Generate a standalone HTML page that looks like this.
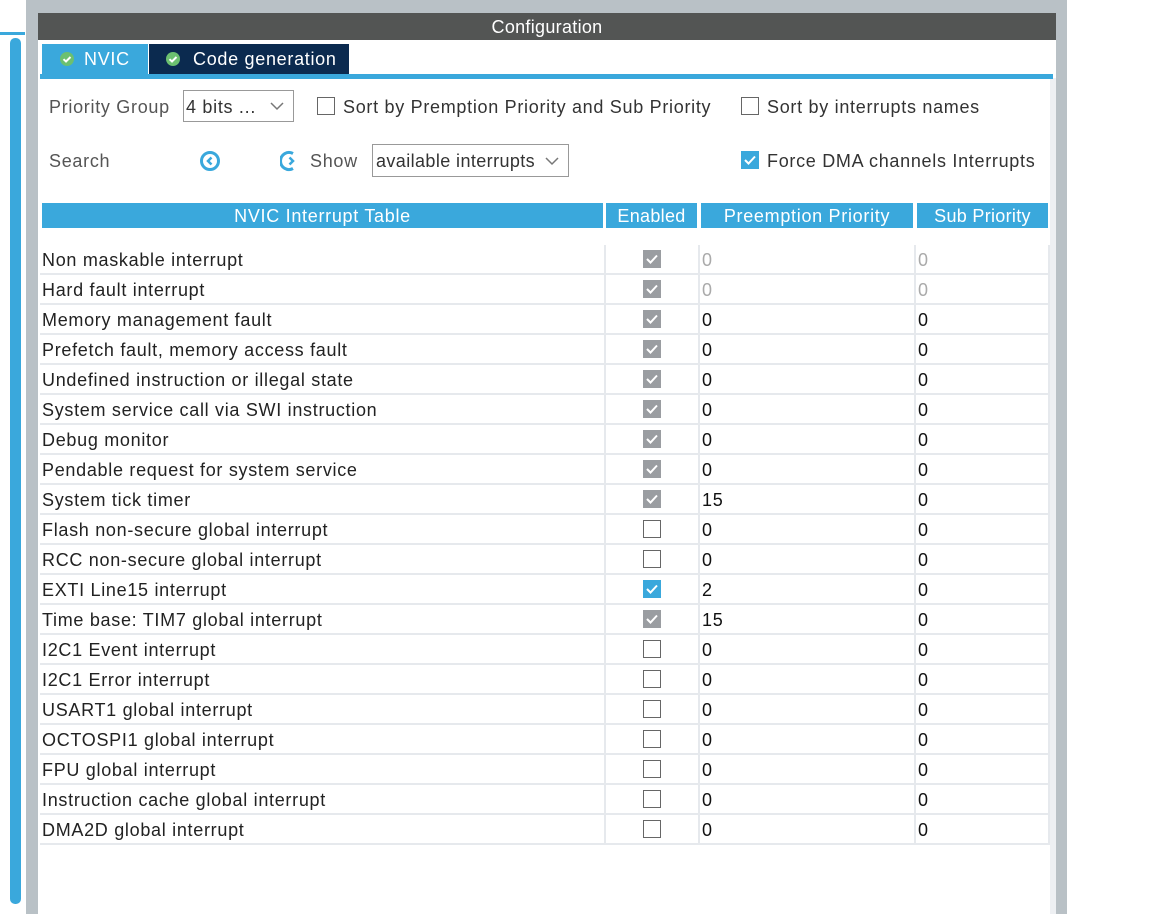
<!DOCTYPE html>
<html><head><meta charset="utf-8"><style>
*{margin:0;padding:0;box-sizing:border-box}
body{width:1154px;height:914px;background:#fff;position:relative;overflow:hidden;font-family:"Liberation Sans",Arial,sans-serif;font-size:18px;color:#333;letter-spacing:0.7px}
.a{position:absolute}
.cb{position:absolute;width:18px;height:18px;border:1.5px solid #666;background:#fff}
.cb.g{background:#9a9da1;border:none}
.cb.b{background:#3aa8dc;border:none}
.cb svg{position:absolute;left:3px;top:4px}
.row{position:absolute;left:40px;width:1010px;height:30px;border-bottom:2px solid #e6e9ed}
.row span{position:absolute;top:5px}
.th{position:absolute;top:203px;height:25px;background:#3aa8dc;color:#fff;text-align:center;line-height:27px}
</style></head><body>
<div class="a" style="left:0;top:32px;width:25px;height:3px;background:#3aa8dc"></div>
<div class="a" style="left:10px;top:38px;width:11px;height:866px;background:#3aa8dc;border-radius:5px"></div>
<div class="a" style="left:26px;top:0;width:1041px;height:914px;background:#b9c1c6"></div>
<div class="a" style="left:38px;top:13px;width:1018px;height:901px;background:#fff"></div>
<div class="a" style="left:38px;top:13px;width:1018px;height:27px;background:#535554;color:#fff;text-align:center;line-height:29px;letter-spacing:0.3px">Configuration</div>
<div class="a" style="left:1050px;top:78px;width:6px;height:836px;background:#eef0f3"></div>
<div class="a" style="left:42px;top:44px;width:106px;height:32px;background:#3aa8dc;color:#fff;line-height:30px;padding-left:20px"><svg class="a" style="left:18px;top:8px" width="14" height="14"><circle cx="7" cy="7" r="7" fill="#6cc070"/><path d="M3.5 7.2l2.5 2.3 4.5-4.5" stroke="#fff" stroke-width="2" fill="none"/></svg><span style="margin-left:22px">NVIC</span></div>
<div class="a" style="left:149px;top:44px;width:200px;height:31px;background:#0b2a4f;color:#fff;line-height:30px"><svg class="a" style="left:17px;top:8px" width="14" height="14"><circle cx="7" cy="7" r="7" fill="#6cc070"/><path d="M3.5 7.2l2.5 2.3 4.5-4.5" stroke="#fff" stroke-width="2" fill="none"/></svg><span style="margin-left:44px">Code generation</span></div>
<div class="a" style="left:40px;top:74px;width:1013px;height:5px;background:#3aa8dc"></div>
<div class="a" style="left:49px;top:97px;color:#555">Priority Group</div>
<div class="a" style="left:183px;top:90px;width:111px;height:32px;border:1.5px solid #999;padding:6px 0 0 2px;color:#333">4 bits ...<svg class="a" style="left:86px;top:11px" width="14" height="9"><path d="M1 1l6 6 6-6" stroke="#777" stroke-width="1.5" fill="none"/></svg></div>
<div class="cb" style="left:317px;top:97px"></div>
<div class="a" style="left:343px;top:97px">Sort by Premption Priority and Sub Priority</div>
<div class="cb" style="left:741px;top:97px"></div>
<div class="a" style="left:767px;top:97px">Sort by interrupts names</div>
<div class="a" style="left:49px;top:151px;color:#555">Search</div>
<svg class="a" style="left:199px;top:150px" width="22" height="22"><circle cx="11" cy="11" r="8.5" stroke="#3aa8dc" stroke-width="3" fill="none"/><path d="M12.5 7.5L9 11l3.5 3.5" stroke="#3aa8dc" stroke-width="2.5" fill="none"/></svg>
<svg class="a" style="left:280px;top:150px" width="16" height="22"><path d="M13 3.5A8.5 8.5 0 1 0 13 18.5" stroke="#3aa8dc" stroke-width="3" fill="none"/><path d="M9.5 7.5L13 11l-3.5 3.5" stroke="#3aa8dc" stroke-width="2.5" fill="none"/></svg>
<div class="a" style="left:310px;top:151px;color:#555">Show</div>
<div class="a" style="left:372px;top:144px;width:197px;height:33px;border:1.5px solid #999;padding:6px 0 0 3px;letter-spacing:0.4px">available interrupts<svg class="a" style="left:172px;top:12px" width="14" height="9"><path d="M1 1l6 6 6-6" stroke="#777" stroke-width="1.5" fill="none"/></svg></div>
<div class="cb b" style="left:741px;top:151px"><svg width="12" height="10"><path d="M1 5l3.5 3.5L11 1.5" stroke="#fff" stroke-width="2" fill="none"/></svg></div>
<div class="a" style="left:767px;top:151px">Force DMA channels Interrupts</div>
<div class="th" style="left:42px;width:561px">NVIC Interrupt Table</div>
<div class="th" style="left:606px;width:91px;letter-spacing:0.3px">Enabled</div>
<div class="th" style="left:701px;width:212px">Preemption Priority</div>
<div class="th" style="left:917px;width:131px;letter-spacing:0.3px">Sub Priority</div>
<div class="a" style="left:604px;top:245px;width:2px;height:600px;background:#e6e9ed"></div>
<div class="a" style="left:698px;top:245px;width:2px;height:600px;background:#e6e9ed"></div>
<div class="a" style="left:914px;top:245px;width:2px;height:600px;background:#e6e9ed"></div>
<div class="a" style="left:1048px;top:245px;width:2px;height:600px;background:#e6e9ed"></div>
<div id="rows"></div>
<script>
var R=[["Non maskable interrupt","g","0","0",1],["Hard fault interrupt","g","0","0",1],["Memory management fault","g","0","0"],["Prefetch fault, memory access fault","g","0","0"],["Undefined instruction or illegal state","g","0","0"],["System service call via SWI instruction","g","0","0"],["Debug monitor","g","0","0"],["Pendable request for system service","g","0","0"],["System tick timer","g","15","0"],["Flash non-secure global interrupt","","0","0"],["RCC non-secure global interrupt","","0","0"],["EXTI Line15 interrupt","b","2","0"],["Time base: TIM7 global interrupt","g","15","0"],["I2C1 Event interrupt","","0","0"],["I2C1 Error interrupt","","0","0"],["USART1 global interrupt","","0","0"],["OCTOSPI1 global interrupt","","0","0"],["FPU global interrupt","","0","0"],["Instruction cache global interrupt","","0","0"],["DMA2D global interrupt","","0","0"]];
var h="";R.forEach(function(r,i){var t=245+i*30;var c=r[4]?"color:#aaa":"color:#111";
h+='<div class="row" style="top:'+t+'px"><span style="left:2px;color:#222">'+r[0]+'</span><div class="cb '+r[1]+'" style="left:603px;top:5px">'+(r[1]?'<svg width="12" height="10"><path d="M1 5l3.5 3.5L11 1.5" stroke="#fff" stroke-width="2" fill="none"/></svg>':'')+'</div><span style="left:662px;'+c+'">'+r[2]+'</span><span style="left:878px;'+c+'">'+r[3]+'</span></div>';});
document.getElementById("rows").innerHTML=h;
</script>
</body></html>
